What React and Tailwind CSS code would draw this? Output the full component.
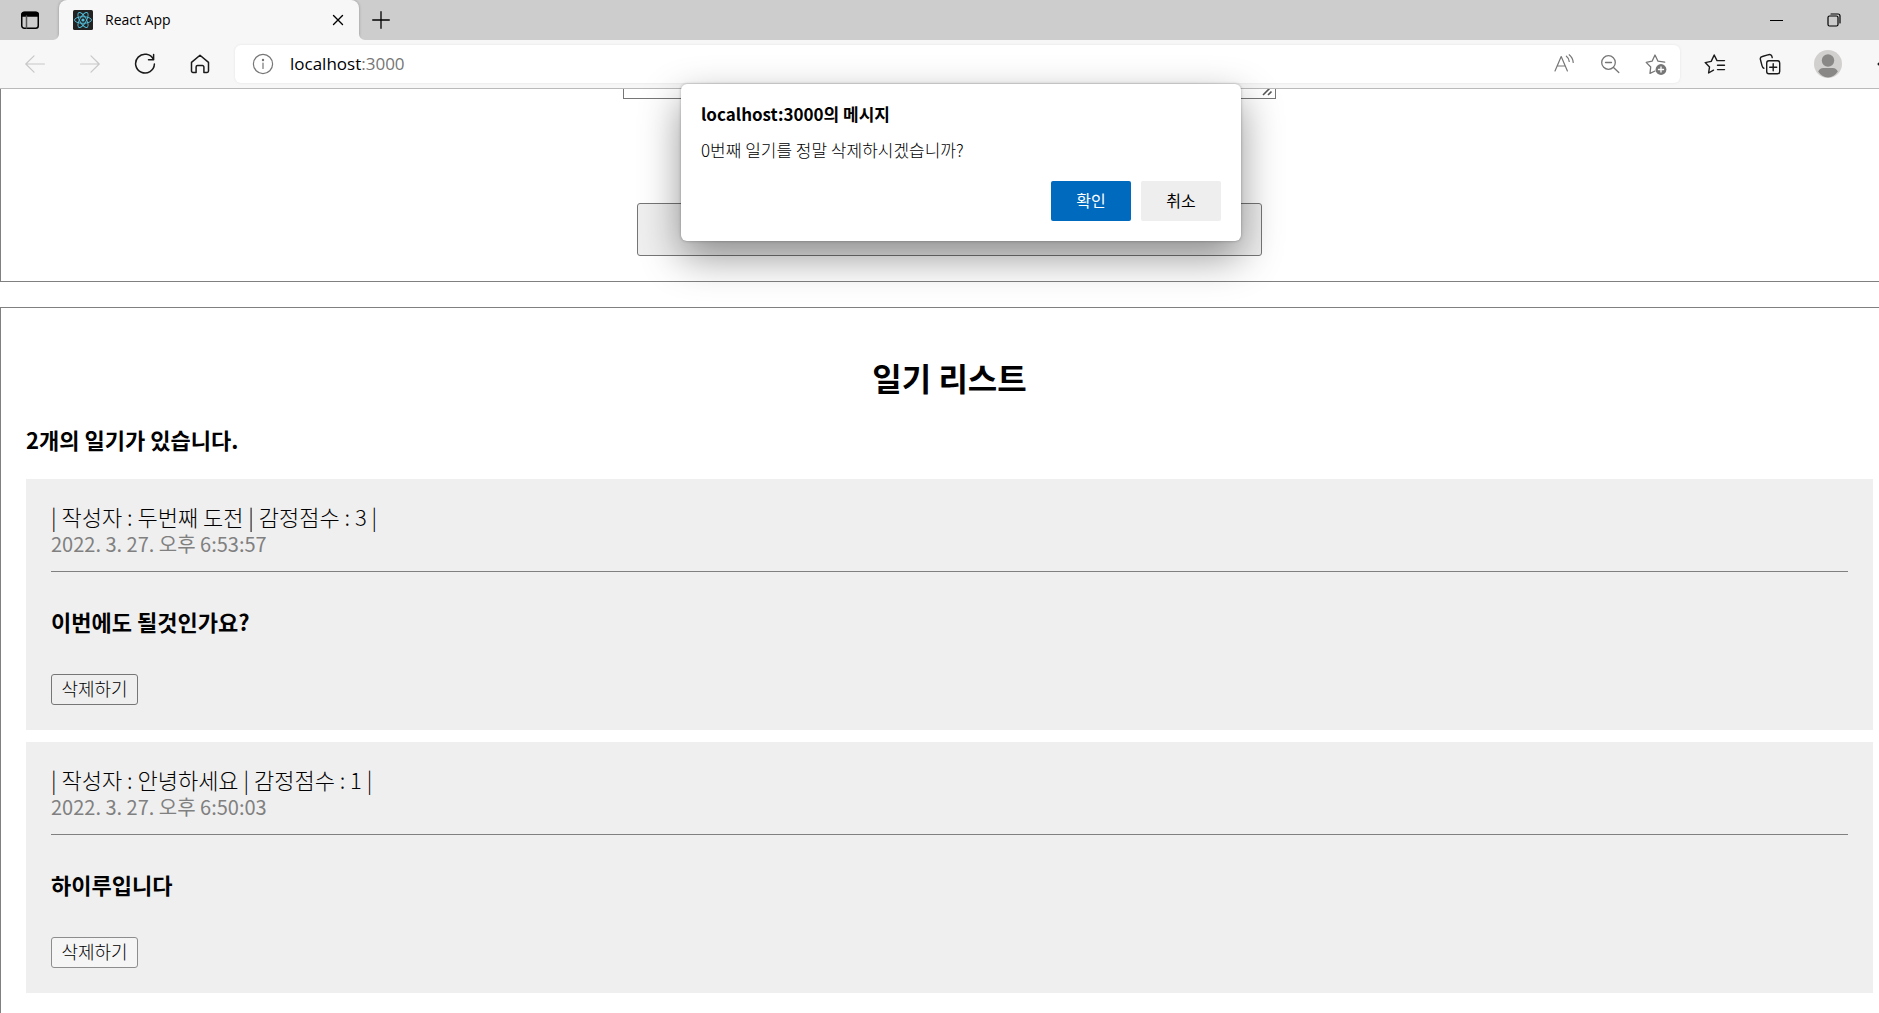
import React, { useState } from 'react';

const initialDiaries = [
  { id: 1, author: '두번째 도전', emotion: 3, date: '2022. 3. 27. 오후 6:53:57', content: '이번에도 될것인가요?' },
  { id: 0, author: '안녕하세요', emotion: 1, date: '2022. 3. 27. 오후 6:50:03', content: '하이루입니다', hovered: true },
];

const Icon = ({ size = 20, stroke = 1, className = '', children }) => (
  <svg
    width={size}
    height={size}
    viewBox={`0 0 ${size} ${size}`}
    fill="none"
    stroke="currentColor"
    strokeWidth={stroke}
    strokeLinecap="round"
    strokeLinejoin="round"
    className={`shrink-0 ${className}`}
    aria-hidden="true"
  >
    {children}
  </svg>
);

const ToolButton = ({ label, className = '', children, ...rest }) => (
  <button type="button" aria-label={label} className={`flex h-full shrink-0 items-center justify-center ${className}`} {...rest}>
    {children}
  </button>
);

const TabBar = () => (
  <div className="flex h-10 shrink-0 overflow-hidden bg-[#cdcdcd] text-black">
    <ToolButton label="탭 작업 메뉴" className="w-[59px]">
      <Icon stroke={1.5}>
        <rect x="1.75" y="2.25" width="16.5" height="16" rx="2.5" />
        <path d="M2 6V4.5A2 2 0 0 1 4 2.5h12a2 2 0 0 1 2 2V6z" fill="currentColor" />
        <path d="M6.5 6v12" stroke="#555" />
      </Icon>
    </ToolButton>

    {/* Active tab */}
    <div className="relative flex w-[300px] shrink-0 items-center rounded-t-lg bg-[#f7f7f7] pr-[11px] pl-[14px] shadow-[0_0_3px_rgba(0,0,0,0.3)]">
      <svg className="absolute bottom-0 -left-[6px]" width="6" height="6" aria-hidden="true">
        <path d="M6 0v6H0a6 6 0 0 0 6-6z" fill="#f7f7f7" />
      </svg>
      <svg className="absolute -right-[6px] bottom-0" width="6" height="6" aria-hidden="true">
        <path d="M0 0v6h6a6 6 0 0 1-6-6z" fill="#f7f7f7" />
      </svg>
      <svg width="20" height="20" viewBox="0 0 20 20" fill="none" stroke="#53c1de" strokeWidth="0.9" aria-hidden="true">
        <rect width="20" height="20" rx="1.5" fill="#222" stroke="none" />
        <ellipse cx="10" cy="10" rx="8.5" ry="3.3" />
        <ellipse cx="10" cy="10" rx="8.5" ry="3.3" transform="rotate(60 10 10)" />
        <ellipse cx="10" cy="10" rx="8.5" ry="3.3" transform="rotate(120 10 10)" />
        <circle cx="10" cy="10" r="1.6" fill="#53c1de" stroke="none" />
      </svg>
      <span className="ml-3 flex-1 font-['Open_Sans',sans-serif] text-sm">React App</span>
      <button type="button" aria-label="탭 닫기" className="flex h-5 w-5 items-center justify-center">
        <Icon size={12} stroke={1.4}>
          <path d="M1.5 1.5l9 9M10.5 1.5l-9 9" />
        </Icon>
      </button>
    </div>

    <ToolButton label="새 탭" className="w-[43px]">
      <Icon size={18} stroke={1.3}>
        <path d="M9 .7v16.6M.7 9h16.6" />
      </Icon>
    </ToolButton>

    {/* Window controls run past the right edge */}
    <div className="-mr-[40px] ml-auto flex">
      <ToolButton label="최소화" className="w-[57px]">
        <Icon size={13}>
          <path d="M0 6.5h13" strokeLinecap="butt" />
        </Icon>
      </ToolButton>
      <ToolButton label="이전 크기로 복원" className="w-[57px]">
        <Icon size={14} stroke={1.2}>
          <rect x="1" y="3" width="10" height="10" rx="1.5" />
          <path d="M4 1h7a2 2 0 0 1 2 2v7" />
        </Icon>
      </ToolButton>
      <div className="w-[57px]"></div>
    </div>
  </div>
);

const Toolbar = () => (
  <div className="flex h-[49px] shrink-0 items-center overflow-hidden border-b border-[#bababa] bg-[#f7f7f7] pl-[7px] text-[#1a1a1a]">
    <ToolButton label="뒤로" className="w-[55px] text-[#c8c8c8]" disabled>
      <Icon stroke={1.2}>
        <path d="M19.4 10H1M9 1.8L.8 10 9 18.2" />
      </Icon>
    </ToolButton>
    <ToolButton label="앞으로" className="w-[55px] text-[#c8c8c8]" disabled>
      <Icon stroke={1.2}>
        <path d="M.6 10H19M11 1.8L19.2 10 11 18.2" />
      </Icon>
    </ToolButton>
    <ToolButton label="새로 고침" className="w-[55px]">
      <Icon size={22} stroke={1.5}>
        <path d="M19.5 6.6A9.4 9.4 0 1 0 20.4 11M19.6 1.6v5.1h-5.1" />
      </Icon>
    </ToolButton>
    <ToolButton label="홈" className="w-[55px]">
      <Icon stroke={1.5}>
        <path d="M1.5 8.4L10 1.2l8.5 7.2v8.6a1.4 1.4 0 0 1-1.4 1.4h-3.2V13a1.5 1.5 0 0 0-1.5-1.5H7.6A1.5 1.5 0 0 0 6.1 13v5.4H2.9A1.4 1.4 0 0 1 1.5 17z" />
      </Icon>
    </ToolButton>

    {/* Address bar */}
    <div className="ml-2 flex h-[38px] min-w-0 flex-1 items-center rounded-md bg-white pr-px text-[#767676] shadow-[0_0_3px_rgba(0,0,0,0.08)]">
      <ToolButton label="사이트 정보 보기" className="w-[55px]">
        <Icon size={22} stroke={1.2}>
          <circle cx="11" cy="11" r="9.6" />
          <path d="M11 10v5.5" />
          <circle cx="11" cy="7" r=".6" fill="currentColor" />
        </Icon>
      </ToolButton>
      <a href="#top" className="flex-1 font-['Open_Sans',sans-serif] text-[17px]">
        <span className="text-black">localhost</span>:3000
      </a>
      <ToolButton label="소리내어 읽기" className="w-[46px]">
        <Icon stroke={1.2}>
          <path d="M1 17L7.2 2.5 13.4 17M3.1 12h8.2" />
          <path d="M12.4 2.2q2.6 2 2.8 5.2M15.2.8q3.6 3 4 7.6" />
        </Icon>
      </ToolButton>
      <ToolButton label="축소" className="w-[46px]">
        <Icon stroke={1.3}>
          <circle cx="8.5" cy="8.5" r="6.8" />
          <path d="M13.5 13.5l5.3 5M5.5 8.5h6" />
        </Icon>
      </ToolButton>
      <ToolButton label="즐겨찾기에 추가" className="w-[46px]">
        <Icon size={22} stroke={1.3}>
          <path d="M10 18l-5 2.4.7-6.4L1.2 9.4l5.9-1.2L10 2l3 6.2 6.7 1" />
          <circle cx="16" cy="16.5" r="5.4" fill="currentColor" stroke="none" />
          <path d="M16 14v5M13.5 16.5h5" stroke="#fff" />
        </Icon>
      </ToolButton>
    </div>

    <div className="-mr-[30px] ml-[7px] flex h-full">
      <ToolButton label="즐겨찾기" className="w-[55px]">
        <Icon size={22} stroke={1.4}>
          <path d="M9.5 17.2L4.6 20l.9-5.9L1.2 9.6l6-1.2L10.2 2l2.8 5.6h7.5M13.5 12.2h7M13.5 16.6h7" />
        </Icon>
      </ToolButton>
      <ToolButton label="컬렉션" className="w-[55px]">
        <Icon size={22} stroke={1.4}>
          <rect x="7.7" y="7.7" width="13" height="13" rx="2.2" />
          <path d="M14.2 10.7v7M10.7 14.2h7" />
          <path d="M4.8 15.2C3.7 14.9 3.3 14 3 12.7L1.4 6.5C1 4.9 1.7 3.9 3.3 3.5L9.7 1.7c1.6-.4 2.8.1 3.2 1.7l.3 1.2" />
        </Icon>
      </ToolButton>
      <ToolButton label="프로필" className="w-[62px]">
        <svg width="28" height="28" viewBox="0 0 28 28" aria-hidden="true">
          <circle cx="14" cy="14" r="14" fill="#d2d0ce" />
          <circle cx="14" cy="10.5" r="6.2" fill="#8a8886" />
          <path d="M4.2 21.5q1.6-3.5 4.8-3.5h10q3.2 0 4.8 3.5A13 13 0 0 1 14 27.6a13 13 0 0 1-9.8-6.1z" fill="#8a8886" />
        </svg>
      </ToolButton>
      <ToolButton label="설정 및 기타" className="w-[50px]">
        <svg width="16" height="4" fill="currentColor" aria-hidden="true">
          <circle cx="3" cy="2" r="1.5" />
          <circle cx="8" cy="2" r="1.5" />
          <circle cx="13" cy="2" r="1.5" />
        </svg>
      </ToolButton>
    </div>
  </div>
);

const DiaryEditor = () => (
  <section className="flex flex-col items-center overflow-hidden border-b border-l border-[#808080] pr-[6px] pb-[25px] pl-[25px]">
    <div className="relative -mt-[30px]">
      <textarea aria-label="일기 내용" className="block h-10 w-[653px] resize-none border border-[#767676] bg-white" />
      <svg className="absolute right-[3px] bottom-[3px]" width="11" height="9" stroke="#555" strokeWidth="1.6" aria-hidden="true">
        <path d="M1 8l7-7M6 8l3.5-3.5" />
      </svg>
    </div>
    <button
      type="button"
      aria-label="일기 저장하기"
      className="mt-[104px] h-[53px] w-[625px] rounded-[3px] border border-[#767676] bg-[#efefef]"
    ></button>
  </section>
);

const DiaryItem = ({ author, emotion, date, content, hovered, onRemove }) => (
  <article className="bg-[#efefef] px-[25px] pt-[23px] pb-[25px]">
    <div className="border-b border-[#808080] pb-[13px]">
      <div className="text-[22px] leading-7 font-light">
        | 작성자 : {author} | 감정점수 : {emotion} |
      </div>
      <div className="text-xl leading-7 font-normal text-[#808080]">{date}</div>
    </div>
    <div className="mt-[35px] mb-[39px] text-[22px] leading-7 font-bold">{content}</div>
    <button
      type="button"
      onClick={onRemove}
      className={`block h-[31px] w-[87px] rounded-[3px] border pb-1 text-lg leading-6 font-light ${
        hovered ? 'border-[#8d8d8d] bg-[#f5f5f5]' : 'border-[#767676] bg-[#efefef]'
      }`}
    >
      삭제하기
    </button>
  </article>
);

const DiaryList = ({ diaries, onRemove }) => (
  <section className="mt-[25px] flex-1 border-t border-l border-[#808080] pt-[25px] pr-[6px] pl-[25px]">
    <h2 className="mt-6 text-center text-[32px] leading-10 font-bold">일기 리스트</h2>
    <h4 className="mt-7 mb-[26px] text-[22px] leading-7 font-bold">{diaries.length}개의 일기가 있습니다.</h4>
    <div className="flex flex-col gap-3">
      {diaries.map((it) => (
        <DiaryItem key={it.id} {...it} onRemove={() => onRemove(it.id)} />
      ))}
    </div>
  </section>
);

const ConfirmDialog = ({ onConfirm, onCancel }) => (
  <div
    role="dialog"
    aria-labelledby="confirm-title"
    className="absolute top-[84px] left-[681px] w-[560px] rounded-md bg-white px-5 pt-[18px] pb-5 shadow-[0_0_3px_rgba(0,0,0,0.3),0_16px_40px_rgba(0,0,0,0.42)]"
  >
    <h1 id="confirm-title" className="text-[17px] leading-6 font-bold">localhost:3000의 메시지</h1>
    <p className="mt-3 text-[17px] leading-6 font-light">0번째 일기를 정말 삭제하시겠습니까?</p>
    <div className="mt-[19px] flex justify-end gap-[10px] text-base">
      <button type="button" onClick={onConfirm} className="h-10 w-20 rounded-xs bg-[#006abe] pb-[3px] text-white">
        확인
      </button>
      <button type="button" onClick={onCancel} className="h-10 w-20 rounded-xs bg-[#eeeeee] pb-[3px]">
        취소
      </button>
    </div>
  </div>
);

export default function App() {
  const [diaries, setDiaries] = useState(initialDiaries);
  const [targetId, setTargetId] = useState(0);

  const handleConfirm = () => {
    setDiaries(diaries.filter((it) => it.id !== targetId));
    setTargetId(null);
  };

  return (
    <div id="top" className="relative flex h-screen flex-col overflow-hidden bg-white font-['Noto_Sans_CJK_KR',sans-serif] text-black">
      <TabBar />
      <Toolbar />
      <main className="flex min-h-0 flex-1 flex-col overflow-hidden">
        <DiaryEditor />
        <DiaryList diaries={diaries} onRemove={setTargetId} />
      </main>
      {targetId !== null && <ConfirmDialog onConfirm={handleConfirm} onCancel={() => setTargetId(null)} />}
    </div>
  );
}
